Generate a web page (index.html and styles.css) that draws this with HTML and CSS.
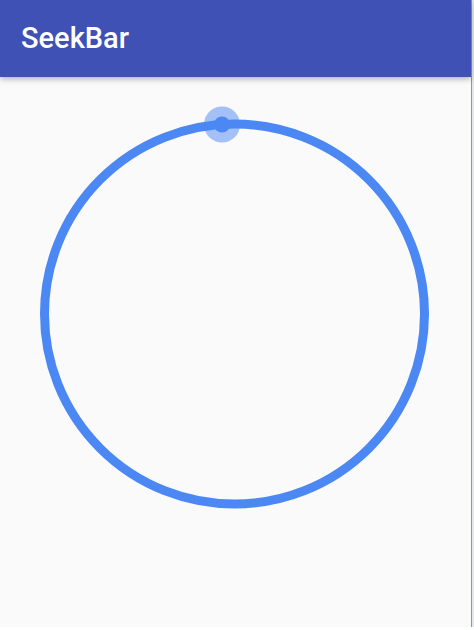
FILE: index.html
```html
<!DOCTYPE html>
<html>
<head>
<meta charset="utf-8">
<link rel="stylesheet" href="styles.css">
</head>
<body>
<div class="frame">
  <div class="screen">
    <header class="appbar">
      <h1 class="title">SeekBar</h1>
    </header>
    <main class="content">
      <svg class="seek" width="471" height="550" viewBox="0 0 471 550">
        <circle cx="234.5" cy="237" r="190" fill="none" stroke="#4b88f3" stroke-width="9"/>
        <circle cx="222" cy="47.5" r="18" fill="#4b88f3" fill-opacity="0.5"/>
        <circle cx="222" cy="47.5" r="8" fill="#4b88f3"/>
      </svg>
    </main>
  </div>
  <div class="edge"></div>
</div>
<div class="bottom"></div>
</body>
</html>
```

FILE: styles.css
```css
html, body {
  margin: 0;
  padding: 0;
  width: 474px;
  height: 630px;
  overflow: hidden;
  background: #ffffff;
}
.frame {
  display: flex;
  height: 627px;
}
.screen {
  width: 471px;
  display: flex;
  flex-direction: column;
  background: #fafafa;
}
.appbar {
  height: 77px;
  background: #3f51b5;
  display: flex;
  align-items: center;
  padding-left: 21px;
  box-shadow: 0 2px 6px rgba(0, 0, 0, 0.3);
  position: relative;
  z-index: 1;
}
.title {
  margin: 0 0 1px 0;
  color: #ffffff;
  font-family: Roboto, "Noto Sans", sans-serif;
  font-weight: 500;
  font-size: 29px;
  letter-spacing: 0;
}
.content {
  flex: 1;
  display: flex;
}
.seek {
  display: block;
}
.edge {
  flex: 1;
  background: #e4e8ec;
  border-left: 1px solid #7f9bb5;
}
.bottom {
  height: 3px;
  background: #ffffff;
}
```
